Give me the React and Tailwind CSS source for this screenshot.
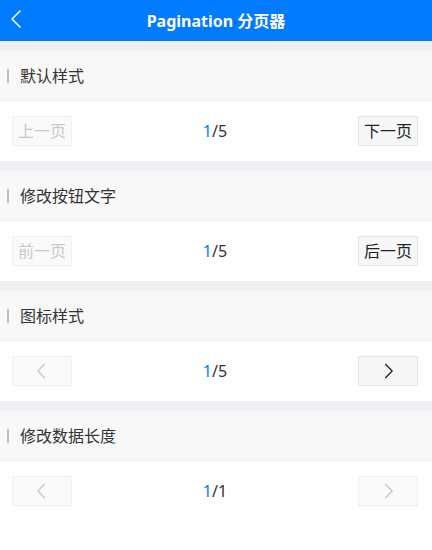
import React from "react";

const font = { fontFamily: '"Noto Sans", "Noto Sans CJK SC", sans-serif' };

const ChevronLeft = ({ className }) => (
  <svg viewBox="0 0 24 24" className={className} fill="none" stroke="currentColor" strokeWidth="1.6" strokeLinecap="round" strokeLinejoin="round">
    <path d="M15 4 7 12l8 8" />
  </svg>
);

const ChevronRight = ({ className }) => (
  <svg viewBox="0 0 24 24" className={className} fill="none" stroke="currentColor" strokeWidth="1.6" strokeLinecap="round" strokeLinejoin="round">
    <path d="M9 4l8 8-8 8" />
  </svg>
);

const PageButton = ({ disabled, children }) => (
  <div
    className={[
      "w-[60px] h-[30px] flex items-center justify-center text-[16px] border",
      disabled
        ? "bg-[#fafafa] border-[#f0f0f0] text-[#c8c8c8]"
        : "bg-[#f7f7f7] border-[#e5e5e5] text-[#222]",
    ].join(" ")}
  >
    {children}
  </div>
);

const Section = ({ title, prev, next, current, total, nextDisabled }) => (
  <div>
    <div className="h-[10px] bg-[#efeff4]" />
    <div className="h-[50px] bg-[#f8f8f8] border-b border-[#ececec] flex items-center pl-[7px]">
      <span className="w-[2px] h-[14px] bg-[#bdbdbd]" />
      <span className="ml-[11px] text-[16px] text-[#333]">{title}</span>
    </div>
    <div className="h-[60px] bg-white flex items-center justify-between pl-3 pr-[14px]">
      <PageButton disabled>{prev}</PageButton>
      <div className="text-[16px] text-[#333]">
        <span className="text-[#007aff]">{current}</span>/{total}
      </div>
      <PageButton disabled={nextDisabled}>{next}</PageButton>
    </div>
  </div>
);

export default function App() {
  return (
    <div style={font} className="w-[432px] min-h-[550px] bg-white">
      <div className="h-[41px] bg-[#007aff] flex items-center justify-center relative">
        <ChevronLeft className="absolute left-[5px] top-[7px] w-[24px] h-[24px] text-white" />
        <span className="text-white font-bold text-[16px]">Pagination 分页器</span>
      </div>
      <Section title="默认样式" prev="上一页" next="下一页" current="1" total="5" />
      <Section title="修改按钮文字" prev="前一页" next="后一页" current="1" total="5" />
      <Section
        title="图标样式"
        prev={<ChevronLeft className="w-[20px] h-[20px]" />}
        next={<ChevronRight className="w-[20px] h-[20px]" />}
        current="1"
        total="5"
      />
      <Section
        title="修改数据长度"
        prev={<ChevronLeft className="w-[20px] h-[20px]" />}
        next={<ChevronRight className="w-[20px] h-[20px]" />}
        current="1"
        total="1"
        nextDisabled
      />
    </div>
  );
}
